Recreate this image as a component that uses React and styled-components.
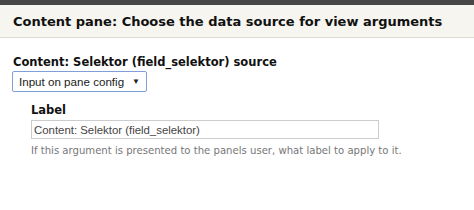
import { createGlobalStyle, styled } from "styled-components";

const GlobalStyle = createGlobalStyle`
  html, body {
    margin: 0;
    padding: 0;
    background: #ffffff;
  }
  body {
    width: 474px;
    height: 210px;
    overflow: hidden;
    font-family: "DejaVu Sans", Verdana, sans-serif;
  }
`;

const Page = styled.div`
  display: flex;
  flex-direction: column;
  width: 474px;
`;

const TopBar = styled.div`
  height: 5px;
  background: #474747;
`;

const Header = styled.div`
  display: flex;
  align-items: center;
  height: 32px;
  padding: 0 13px;
  background: #f6f5f0;
  border-bottom: 1px solid #dcdcd6;
  font-size: 13px;
  font-weight: bold;
  color: #111;
  white-space: nowrap;
`;

const Form = styled.div`
  display: flex;
  flex-direction: column;
  padding: 17px 12px 0;
`;

const FieldLabel = styled.div`
  font-size: 11.5px;
  font-weight: bold;
  color: #111;
  line-height: 14px;
  margin-bottom: ${(p) => p.$gap || 2}px;
  padding-left: ${(p) => p.$indent ?? 1}px;
`;

const Select = styled.div`
  display: flex;
  align-items: center;
  justify-content: space-between;
  width: 135px;
  height: 21px;
  box-sizing: border-box;
  padding: 0 6px 0 6px;
  border: 1px solid #7f9fd6;
  border-radius: 2px;
  font-family: "Liberation Sans", Arial, sans-serif;
  font-size: 11.6px;
  color: #222;
  white-space: nowrap;
`;

const Arrow = styled.span`
  font-size: 8px;
  color: #222;
`;

const Nested = styled.div`
  display: flex;
  flex-direction: column;
  padding: 11px 0 0 19px;
`;

const TextInput = styled.div`
  display: flex;
  align-items: center;
  width: 348px;
  height: 19px;
  box-sizing: border-box;
  padding: 0 2px;
  border: 1px solid #cccccc;
  font-family: "Liberation Sans", Arial, sans-serif;
  font-size: 11.4px;
  color: #444;
`;

const Description = styled.div`
  margin-top: 6px;
  font-size: 10.1px;
  color: #777;
  white-space: nowrap;
`;

export default function App() {
  return (
    <Page>
      <GlobalStyle />
      <TopBar />
      <Header>Content pane: Choose the data source for view arguments</Header>
      <Form>
        <FieldLabel>Content: Selektor (field_selektor) source</FieldLabel>
        <Select>
          <span>Input on pane config</span>
          <Arrow>▼</Arrow>
        </Select>
        <Nested>
          <FieldLabel $gap={3} $indent={0}>Label</FieldLabel>
          <TextInput>Content: Selektor (field_selektor)</TextInput>
          <Description>
            If this argument is presented to the panels user, what label to apply to it.
          </Description>
        </Nested>
      </Form>
    </Page>
  );
}
